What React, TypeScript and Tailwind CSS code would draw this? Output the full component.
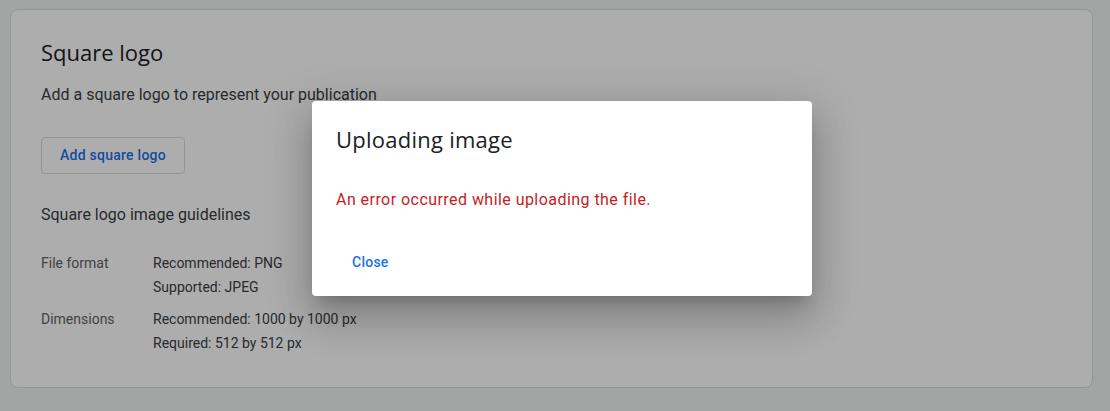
import React from "react";

const sans = { fontFamily: "'Open Sans', 'Noto Sans', sans-serif" };
const roboto = { fontFamily: "Roboto, 'Liberation Sans', sans-serif" };

export default function App() {
  return (
    <div className="relative w-[1110px] h-[411px] bg-[#f1f3f4] overflow-hidden" style={roboto}>
      <div className="pt-[9px] pl-[10px]">
        <div className="w-[1083px] h-[379px] bg-white border border-[#dadce0] rounded-[8px] px-[30px] pt-[28px]">
          <h2 className="text-[22px] leading-[28px] text-[#202124]" style={sans}>Square logo</h2>
          <p className="mt-[17px] text-[16px] leading-[24px] text-[#3c4043]">
            Add a square logo to represent your publication
          </p>
          <button
            className="mt-[30px] h-[37px] w-[144px] border border-[#dadce0] rounded-[4px] text-[14px] font-medium tracking-[0.25px] text-[#1a73e8]"
          >
            Add square logo
          </button>
          <p className="mt-[29px] text-[16px] leading-[24px] text-[#3c4043]">Square logo image guidelines</p>
          <div className="mt-[24px] flex flex-col gap-[8px] text-[14px] leading-[24px] text-[#5f6368]">
            <div className="flex">
              <div className="w-[112px]">File format</div>
              <div className="text-[#3c4043]">
                <div>Recommended: PNG</div>
                <div>Supported: JPEG</div>
              </div>
            </div>
            <div className="flex">
              <div className="w-[112px]">Dimensions</div>
              <div className="text-[#3c4043]">
                <div>Recommended: 1000 by 1000 px</div>
                <div>Required: 512 by 512 px</div>
              </div>
            </div>
          </div>
        </div>
      </div>

      <div className="absolute inset-0 bg-[rgba(0,0,0,0.32)]" />

      <div className="absolute left-[312px] top-[101px] w-[500px] h-[195px] bg-white rounded-[4px] shadow-[0_11px_15px_-7px_rgba(0,0,0,0.2),0_24px_38px_3px_rgba(0,0,0,0.14),0_9px_46px_8px_rgba(0,0,0,0.12)] px-[24px] pt-[24px] flex flex-col">
        <h3 className="text-[22px] leading-[28px] text-[#202124] tracking-[0.25px]" style={sans}>Uploading image</h3>
        <p className="mt-[35px] text-[16px] leading-[24px] text-[#c5221f] tracking-[0.45px]">
          An error occurred while uploading the file.
        </p>
        <div className="mt-[32px]">
          <button className="h-[36px] px-[16px] text-[14px] font-medium tracking-[0.25px] text-[#1a73e8] rounded-[4px]">
            Close
          </button>
        </div>
      </div>
    </div>
  );
}
